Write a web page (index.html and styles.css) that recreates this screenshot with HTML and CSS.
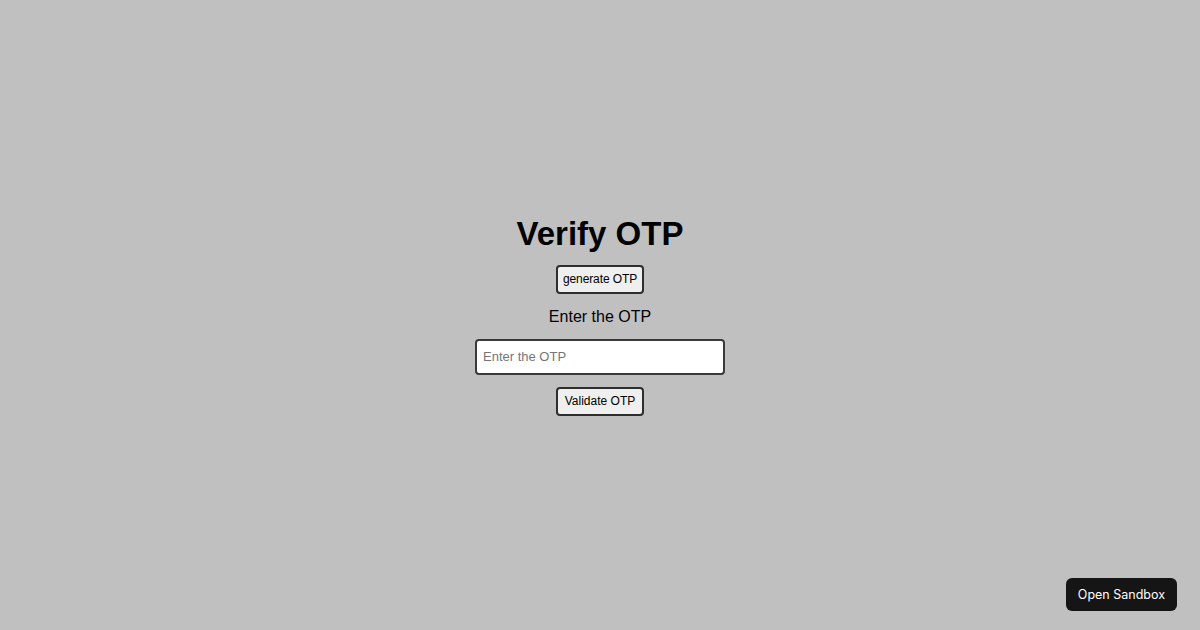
FILE: index.html
```html
<!DOCTYPE html>
<html lang="en">
<head>
    <meta charset="UTF-8">
    <meta name="viewport" content="width=device-width, initial-scale=1.0">
    <title>Verify OTP</title>
    <link rel="stylesheet" href="styles.css">
</head>
<body>

    <div class="otp-box">
        <h1>Verify OTP</h1>
        <button class="otp-btn" id="generate">generate OTP</button>
        <label for="otp" class="otp-label">Enter the OTP</label>
        <input type="text" id="otp" class="otp-input" placeholder="Enter the OTP">
        <button class="otp-btn" id="validate">Validate OTP</button>
    </div>

    <a class="sandbox-btn" href="#">Open Sandbox</a>

</body>
</html>
```

FILE: styles.css
```css
html, body {
    margin: 0;
    height: 100%;
}
body {
    background-color: #c0c0c0;
    font-family: "Liberation Sans", Arial, sans-serif;
    display: flex;
    justify-content: center;
    align-items: center;
}
.otp-box {
    display: flex;
    flex-direction: column;
    align-items: center;
}
h1 {
    font-size: 33px;
    line-height: 37px;
    margin: 0 0 13px;
    color: #000;
}
.otp-btn {
    font-family: "Liberation Sans", Arial, sans-serif;
    font-size: 12px;
    line-height: 15px;
    height: 29px;
    padding: 5px 6px;
    background-color: #efefef;
    color: #000;
    border: 2px solid #2e2e2e;
    border-radius: 4px;
    box-sizing: border-box;
}
#generate {
    padding: 5px 5px;
    letter-spacing: -0.1px;
}
#validate {
    padding: 5px 7px;
}
.otp-label {
    font-size: 16px;
    line-height: 18px;
    margin: 14px 0 13px;
    color: #000;
}
.otp-input {
    width: 250px;
    height: 36px;
    box-sizing: border-box;
    padding: 0 6px;
    font-family: "Liberation Sans", Arial, sans-serif;
    font-size: 13px;
    background: #fff;
    border: 2px solid #3a3a3a;
    border-radius: 4px;
    margin-bottom: 12px;
}
.otp-input::placeholder {
    color: #767676;
}
.sandbox-btn {
    position: fixed;
    right: 23px;
    bottom: 19px;
    background-color: #151515;
    color: #fff;
    font-family: Inter, "Noto Sans", sans-serif;
    font-size: 12.5px;
    text-decoration: none;
    padding: 0 12px;
    height: 33px;
    line-height: 33px;
    border-radius: 6px;
}
```
